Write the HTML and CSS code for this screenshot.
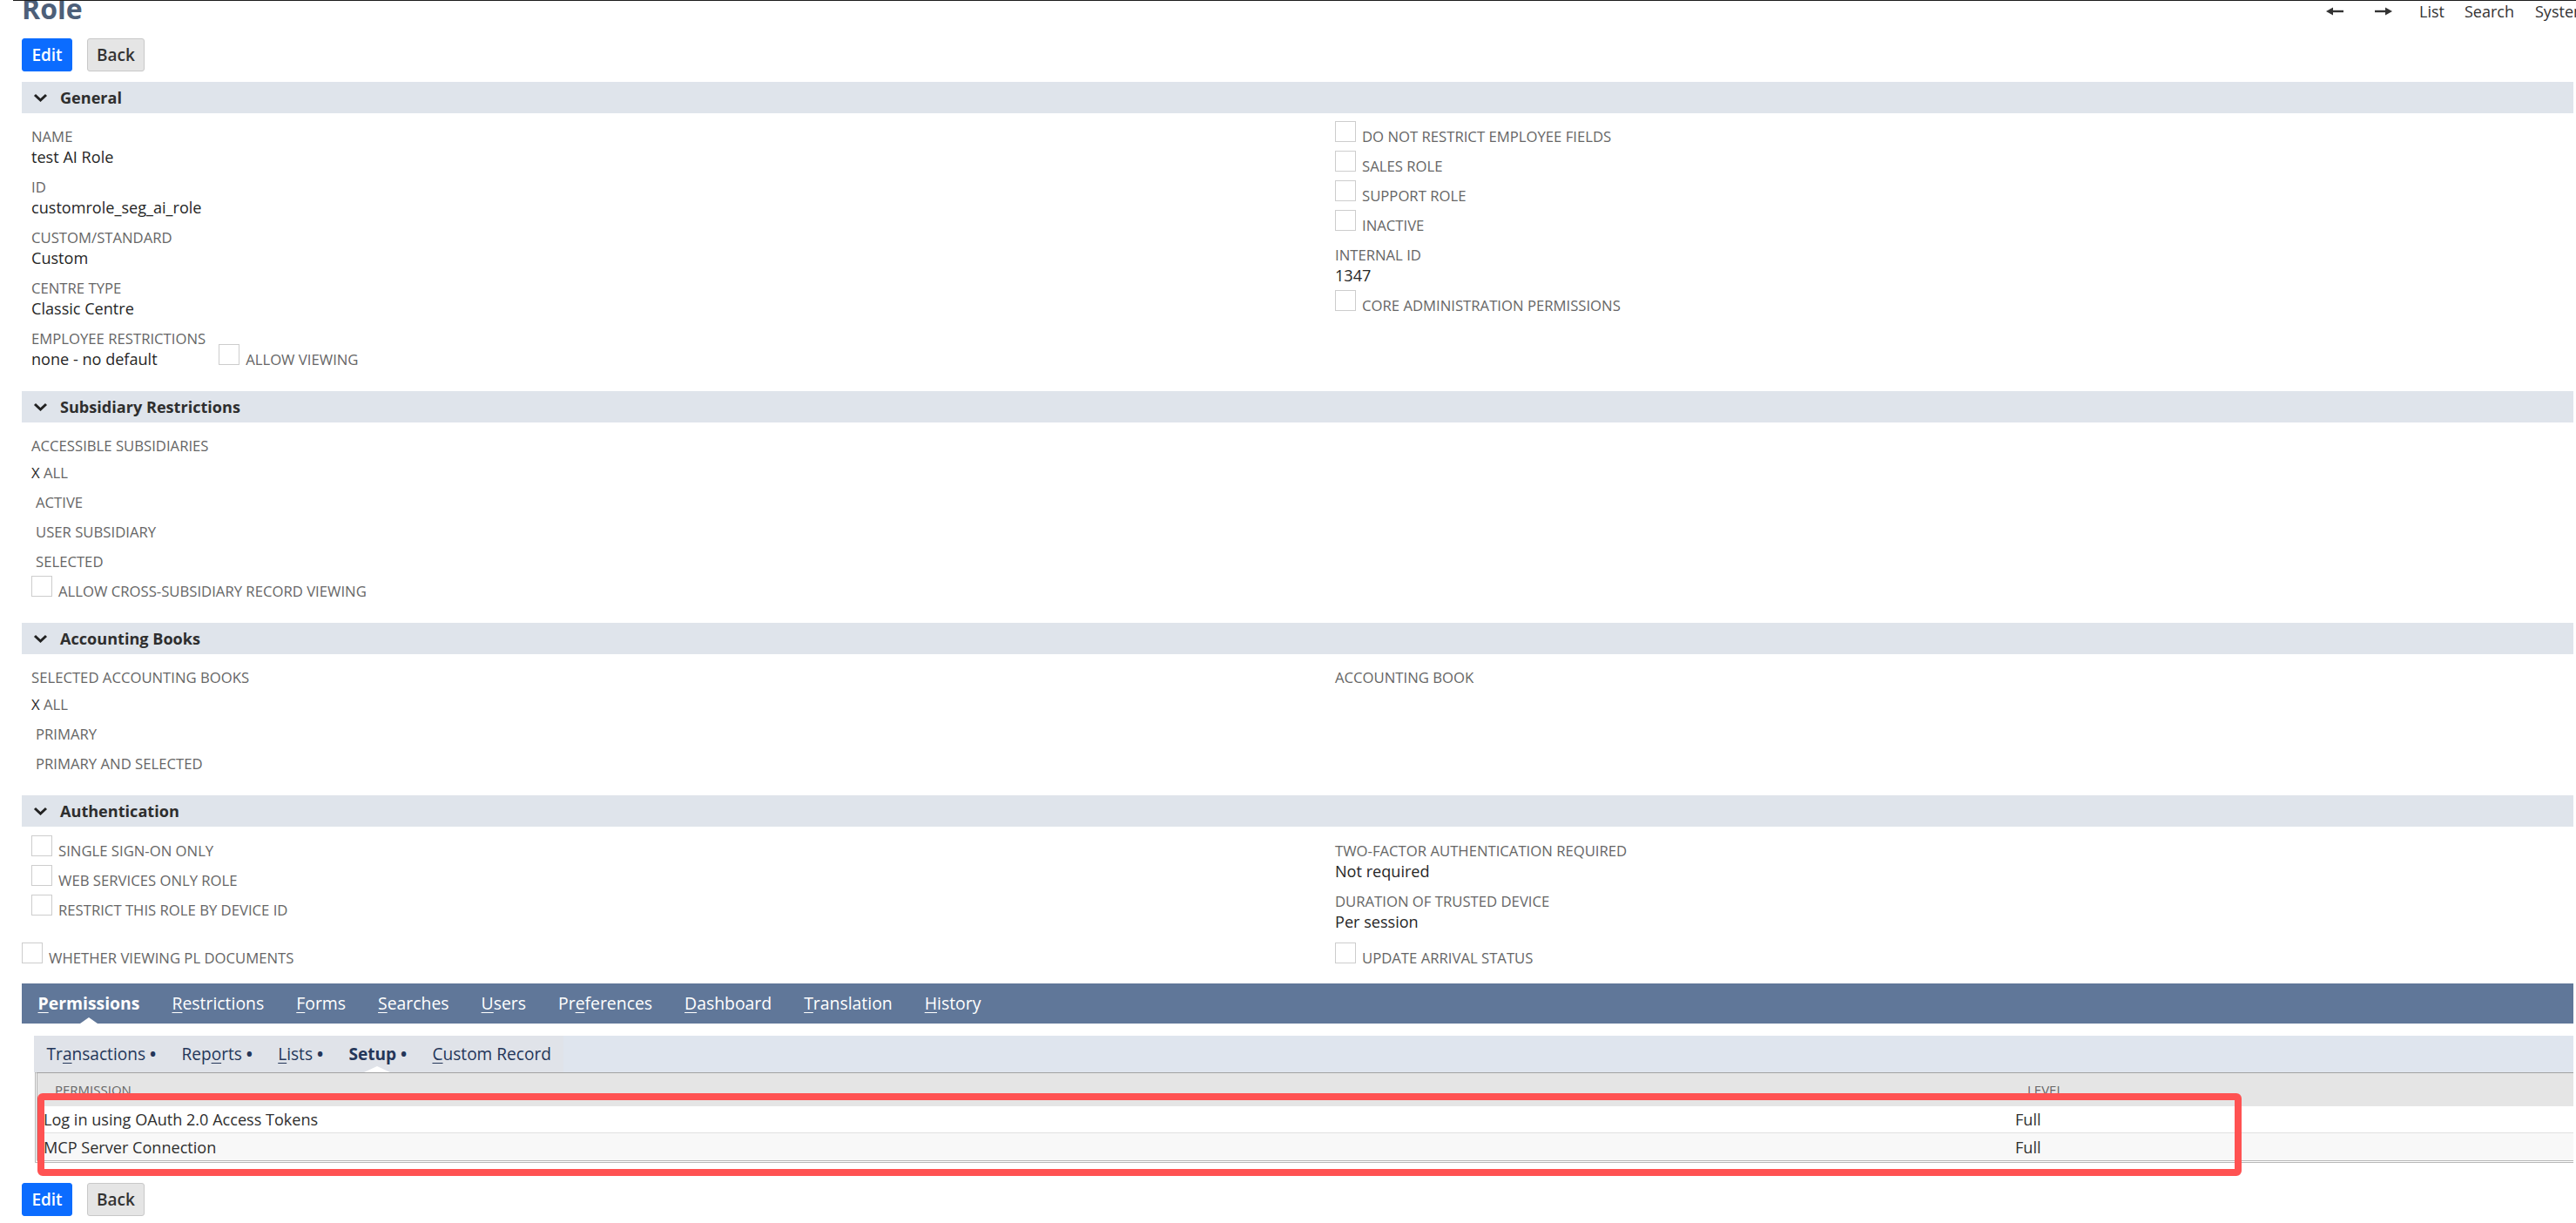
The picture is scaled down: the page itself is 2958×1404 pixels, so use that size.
FILE: index.html
```html
<!DOCTYPE html>
<html lang="en">
<head>
<meta charset="utf-8">
<title>Role</title>
<link rel="stylesheet" href="styles.css">
</head>
<body>
<div class="topline"></div>
<div class="page">
  <header class="titlebar">
    <h1 class="title">Role</h1>
    <nav class="nav">
      <span class="nav-arrow"><svg width="20" height="10" viewBox="0 0 20 10"><line x1="6" y1="5" x2="20" y2="5" stroke="#333" stroke-width="2.4"/><polygon points="0,5 8,0.5 8,9.5" fill="#333"/></svg></span>
      <span class="nav-arrow next"><svg width="20" height="10" viewBox="0 0 20 10"><line x1="0" y1="5" x2="14" y2="5" stroke="#333" stroke-width="2.4"/><polygon points="20,5 12,0.5 12,9.5" fill="#333"/></svg></span>
      <span class="nav-link list">List</span>
      <span class="nav-link search">Search</span>
      <span class="nav-link system">System Information</span>
    </nav>
  </header>

  <div class="content">
    <div class="btnbar top">
      <button class="btn btn-edit">Edit</button>
      <button class="btn btn-back">Back</button>
    </div>

    <section class="sec">
      <div class="sec-head"><svg class="chev" width="17" height="10" viewBox="0 0 17 10"><polyline points="2,2 8.5,8 15,2" fill="none" stroke="#222" stroke-width="3"/></svg><span>General</span></div>
      <div class="sec-body">
        <div class="col">
          <div class="field"><div class="lbl">Name</div><div class="val">test AI Role</div></div>
          <div class="field"><div class="lbl">ID</div><div class="val">customrole_seg_ai_role</div></div>
          <div class="field"><div class="lbl">Custom/Standard</div><div class="val">Custom</div></div>
          <div class="field"><div class="lbl">Centre Type</div><div class="val">Classic Centre</div></div>
          <div class="field-pair">
            <div class="field"><div class="lbl">Employee Restrictions</div><div class="val">none - no default</div></div>
            <div class="cb-row"><span class="cb"></span>ALLOW VIEWING</div>
          </div>
        </div>
        <div class="col">
          <div class="cb-row"><span class="cb"></span>DO NOT RESTRICT EMPLOYEE FIELDS</div>
          <div class="cb-row"><span class="cb"></span>SALES ROLE</div>
          <div class="cb-row"><span class="cb"></span>SUPPORT ROLE</div>
          <div class="cb-row"><span class="cb"></span>INACTIVE</div>
          <div class="field"><div class="lbl">Internal ID</div><div class="val">1347</div></div>
          <div class="cb-row"><span class="cb"></span>CORE ADMINISTRATION PERMISSIONS</div>
        </div>
      </div>
    </section>

    <section class="sec">
      <div class="sec-head"><svg class="chev" width="17" height="10" viewBox="0 0 17 10"><polyline points="2,2 8.5,8 15,2" fill="none" stroke="#222" stroke-width="3"/></svg><span>Subsidiary Restrictions</span></div>
      <div class="sec-body">
        <div class="col">
          <div class="field">
            <div class="lbl">Accessible Subsidiaries</div>
            <div class="opts">
              <div class="opt sel"><span class="x">X</span> ALL</div>
              <div class="opt">ACTIVE</div>
              <div class="opt">USER SUBSIDIARY</div>
              <div class="opt">SELECTED</div>
            </div>
          </div>
          <div class="cb-row"><span class="cb"></span>ALLOW CROSS-SUBSIDIARY RECORD VIEWING</div>
        </div>
        <div class="col"></div>
      </div>
    </section>

    <section class="sec">
      <div class="sec-head"><svg class="chev" width="17" height="10" viewBox="0 0 17 10"><polyline points="2,2 8.5,8 15,2" fill="none" stroke="#222" stroke-width="3"/></svg><span>Accounting Books</span></div>
      <div class="sec-body">
        <div class="col">
          <div class="field">
            <div class="lbl">Selected Accounting Books</div>
            <div class="opts">
              <div class="opt sel"><span class="x">X</span> ALL</div>
              <div class="opt">PRIMARY</div>
              <div class="opt">PRIMARY AND SELECTED</div>
            </div>
          </div>
        </div>
        <div class="col">
          <div class="field"><div class="lbl">Accounting Book</div></div>
        </div>
      </div>
    </section>

    <section class="sec">
      <div class="sec-head"><svg class="chev" width="17" height="10" viewBox="0 0 17 10"><polyline points="2,2 8.5,8 15,2" fill="none" stroke="#222" stroke-width="3"/></svg><span>Authentication</span></div>
      <div class="sec-body auth">
        <div class="col">
          <div class="cb-row"><span class="cb"></span>SINGLE SIGN-ON ONLY</div>
          <div class="cb-row"><span class="cb"></span>WEB SERVICES ONLY ROLE</div>
          <div class="cb-row"><span class="cb"></span>RESTRICT THIS ROLE BY DEVICE ID</div>
        </div>
        <div class="col">
          <div class="field"><div class="lbl">Two-Factor Authentication Required</div><div class="val">Not required</div></div>
          <div class="field"><div class="lbl">Duration of Trusted Device</div><div class="val">Per session</div></div>
        </div>
        <div class="col outdent">
          <div class="cb-row"><span class="cb"></span>WHETHER VIEWING PL DOCUMENTS</div>
        </div>
        <div class="col">
          <div class="cb-row"><span class="cb"></span>UPDATE ARRIVAL STATUS</div>
        </div>
      </div>
    </section>

    <div class="tabs">
      <span class="tab active"><u>P</u>ermissions</span>
      <span class="tab"><u>R</u>estrictions</span>
      <span class="tab"><u>F</u>orms</span>
      <span class="tab"><u>S</u>earches</span>
      <span class="tab"><u>U</u>sers</span>
      <span class="tab">Pr<u>e</u>ferences</span>
      <span class="tab"><u>D</u>ashboard</span>
      <span class="tab"><u>T</u>ranslation</span>
      <span class="tab"><u>H</u>istory</span>
    </div>

    <div class="subtabs">
      <div class="subtab-group">
        <span class="subtab">Tr<u>a</u>nsactions<span class="dot">•</span></span>
        <span class="subtab">Rep<u>o</u>rts<span class="dot">•</span></span>
        <span class="subtab"><u>L</u>ists<span class="dot">•</span></span>
        <span class="subtab active">Setup<span class="dot">•</span></span>
        <span class="subtab"><u>C</u>ustom Record</span>
      </div>
    </div>

    <div class="tbl-wrap">
      <table class="perm">
        <thead>
          <tr><th class="c1">Permission</th><th class="c2">Level</th></tr>
        </thead>
        <tbody>
          <tr class="r1"><td class="c1">Log in using OAuth 2.0 Access Tokens</td><td class="c2">Full</td></tr>
          <tr class="r2"><td class="c1">MCP Server Connection</td><td class="c2">Full</td></tr>
        </tbody>
      </table>
      <div class="annot"></div>
    </div>

    <div class="btnbar bottom">
      <button class="btn btn-edit">Edit</button>
      <button class="btn btn-back">Back</button>
    </div>
  </div>
</div>
</body>
</html>
```

FILE: styles.css
```css
* { box-sizing: border-box; }

html, body { background: #fff; }

body {
  margin: 0;
  font-family: "Open Sans", "Liberation Sans", sans-serif;
  color: #333;
}

.topline {
  height: 1px;
  background: #1c1c1c;
  margin-left: 15px;
}

.page {
  padding-left: 25px;
}

/* ---------- title bar ---------- */
.titlebar {
  display: flex;
  align-items: flex-start;
  height: 43px;
  overflow: hidden;
}

.title {
  margin: -7px 0 0 0;
  font-size: 32px;
  line-height: 32px;
  font-weight: 700;
  color: #4d5f79;
}

.nav {
  display: flex;
  align-items: center;
  margin-left: auto;
  height: 24px;
  font-size: 18px;
  line-height: 24px;
  color: #333;
}

.nav-arrow svg { display: block; }
.nav-arrow.next { margin-left: 36px; }
.nav-link { white-space: nowrap; }
.nav-link.list { margin-left: 31px; }
.nav-link.search { margin-left: 23px; }
.nav-link.system {
  margin-left: 24px;
  width: 47px;
  overflow: hidden;
}

/* ---------- content ---------- */
.content {
  margin-right: 3px;
}

.btnbar {
  display: flex;
  gap: 17px;
  height: 38px;
}
.btnbar.top { margin-bottom: 12px; }
.btnbar.bottom { margin-top: 23px; }

.btn {
  height: 38px;
  padding: 0;
  border-radius: 3px;
  border: 1px solid #c8c8c8;
  background: #e5e5e5;
  color: #333;
  font-family: "Open Sans", "Liberation Sans", sans-serif;
  font-size: 19px;
  font-weight: 600;
  line-height: 36px;
  text-align: center;
}
.btn-edit {
  width: 58px;
  background: #0b6cff;
  border-color: #0b6cff;
  color: #fff;
}
.btn-back { width: 66px; }

/* ---------- sections ---------- */
.sec-head {
  display: flex;
  align-items: center;
  gap: 14px;
  height: 36px;
  padding-left: 13px;
  background: #dfe4eb;
  font-size: 18.1px;
  font-weight: 700;
  color: #2e2e2e;
}
.chev { display: block; flex: none; }

.sec-body {
  display: grid;
  grid-template-columns: 1497px 1fr;
  padding: 16px 0 25px 11px;
}
.sec-body.auth {
  row-gap: 19px;
  padding-top: 17px;
  padding-bottom: 18px;
}

.col {
  display: flex;
  flex-direction: column;
  align-items: flex-start;
  gap: 12px;
}
.col.outdent { margin-left: -11px; }

.lbl {
  font-size: 16.7px;
  line-height: 22px;
  color: #666;
  text-transform: uppercase;
  white-space: nowrap;
}

.val {
  font-size: 18.1px;
  line-height: 24px;
  color: #262626;
  white-space: nowrap;
}

.field-pair {
  display: flex;
  align-items: flex-end;
  gap: 15px;
}

.cb-row {
  height: 22px;
  font-size: 16.7px;
  line-height: 22px;
  color: #666;
  white-space: nowrap;
}

.cb {
  display: inline-block;
  width: 24px;
  height: 24px;
  margin: -7px 7px 0 0;
  border: 1px solid #cdcdcd;
  background: #fff;
  vertical-align: baseline;
}

.opts {
  display: flex;
  flex-direction: column;
  gap: 12px;
  margin-top: 9px;
}
.opt {
  height: 22px;
  font-size: 16.7px;
  line-height: 22px;
  color: #666;
  padding-left: 5px;
  white-space: nowrap;
}
.opt.sel { padding-left: 0; }
.opt .x { color: #2a2a2a; }

/* ---------- tabs ---------- */
.tabs {
  display: flex;
  height: 46px;
  background: #607799;
}
.tab {
  position: relative;
  padding: 0 18.5px;
  font-size: 19.4px;
  line-height: 46px;
  color: #fff;
  white-space: nowrap;
}
.tab u { text-underline-offset: 3px; }
.tab.active { font-weight: 700; }
.tab.active::after {
  content: "";
  position: absolute;
  left: 50%;
  bottom: 0;
  margin-left: -10px;
  border-style: solid;
  border-color: transparent transparent #fff transparent;
  border-width: 0 10px 7px 10px;
}

.subtabs {
  display: flex;
  height: 42px;
  margin: 14px 0 0 14px;
  background: #dfe5ee;
}
.subtab-group {
  display: flex;
  background: #e0e3e9;
}
.subtab {
  position: relative;
  padding: 0 14.6px;
  font-size: 19.1px;
  line-height: 42px;
  color: #243659;
  white-space: nowrap;
}
.subtab u { text-underline-offset: 3px; }
.subtab.active { font-weight: 700; }
.subtab.active::after {
  content: "";
  position: absolute;
  left: 50%;
  bottom: 0;
  margin-left: -15.5px;
  border-style: solid;
  border-color: transparent transparent #fff transparent;
  border-width: 0 15.5px 7px 15.5px;
}
.dot {
  margin-left: 5px;
  font-weight: 700;
}

/* ---------- permissions table ---------- */
.tbl-wrap {
  position: relative;
  margin-left: 15px;
}

.perm {
  width: 100%;
  border-collapse: separate;
  border-spacing: 0;
  border-top: 1px solid #a2a2a2;
  border-left: 3px double #b3b3b3;
  border-bottom: 3px double #b8b8b8;
}

.perm th {
  height: 38px;
  padding: 0 0 0 20px;
  background: #e5e5e5;
  font-size: 15px;
  font-weight: 400;
  color: #666;
  text-align: left;
  text-transform: uppercase;
}
.perm th.c2 {
  width: 651px;
  padding-left: 24px;
}

.perm td {
  height: 31px;
  padding: 0 0 0 7px;
  font-size: 18.1px;
  color: #2f2f2f;
  white-space: nowrap;
}
.perm td.c2 { padding-left: 10px; }
.perm tr.r1 td {
  background: #fff;
  border-bottom: 1px solid #e1e1e1;
}
.perm tr.r2 td { background: #f8f8f8; }

.annot {
  position: absolute;
  left: 3px;
  top: 24px;
  width: 2531px;
  height: 95px;
  border: 8px solid #ff5252;
  border-radius: 6px;
  pointer-events: none;
}
```
